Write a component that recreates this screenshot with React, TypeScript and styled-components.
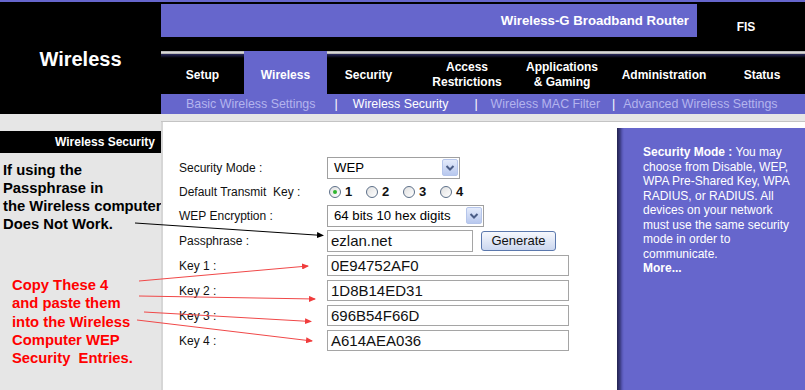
import React from 'react';
import styled, { createGlobalStyle } from 'styled-components';

const PURPLE = '#6666cc';

const GlobalStyle = createGlobalStyle`
  html, body {
    margin: 0;
    padding: 0;
    background: #fff;
  }
  body {
    font-family: "Liberation Sans", Arial, sans-serif;
  }
`;

const Page = styled.div`
  position: relative;
  width: 805px;
  height: 390px;
  overflow: hidden;
  background: #fff;
`;

const Top = styled.div`
  display: flex;
  height: 114px;
  box-sizing: border-box;
  background: #000;
  border-top: 2px solid ${PURPLE};
`;

const Brand = styled.div`
  width: 161px;
  flex-shrink: 0;
  display: flex;
  align-items: center;
  justify-content: center;
  padding-top: 3px;
  color: #fff;
  font-size: 20px;
  font-weight: bold;
`;

const TopRight = styled.div`
  flex: 1;
  display: flex;
  flex-direction: column;
`;

const HeaderRow = styled.div`
  display: flex;
  height: 49px;
`;

const TitleBar = styled.div`
  margin-top: 2px;
  width: 536px;
  height: 33px;
  box-sizing: border-box;
  padding-right: 8px;
  display: flex;
  align-items: center;
  justify-content: flex-end;
  background: ${PURPLE};
  color: #fff;
  font-size: 13.2px;
  font-weight: bold;
`;

const Fis = styled.div`
  flex: 1;
  padding: 18px 10px 0 0;
  text-align: center;
  color: #fff;
  font-size: 12px;
  font-weight: bold;
`;

const NavRow = styled.div`
  display: flex;
  height: 43px;
  background: linear-gradient(
    to bottom,
    #8a8a8a 0,
    #e8e8e8 1px,
    #a8a8a8 3px,
    #2a2a60 3px,
    #000 7px
  );
`;

const Tab = styled.div<{ $w: number; $active?: boolean }>`
  width: ${({ $w }) => $w}px;
  flex-shrink: 0;
  display: flex;
  align-items: center;
  justify-content: center;
  padding-top: 5px;
  box-sizing: border-box;
  text-align: center;
  color: #fff;
  font-size: 12px;
  font-weight: bold;
  line-height: 15px;
  background: ${({ $active }) => ($active ? PURPLE : 'transparent')};
`;

const SubNav = styled.div`
  height: 20px;
  display: flex;
  align-items: center;
  padding-left: 25px;
  background: ${PURPLE};
  font-size: 12.4px;
  white-space: nowrap;
`;

const SubItem = styled.span<{ $active?: boolean }>`
  color: ${({ $active }) => ($active ? '#fff' : '#b4b4ee')};
`;

const Sep = styled.span<{ $l: number; $r: number }>`
  color: #fff;
  margin: 0 ${({ $r }) => $r}px 0 ${({ $l }) => $l}px;
`;

const Body = styled.div`
  display: flex;
  height: 276px;
`;

const LeftCol = styled.div`
  width: 161px;
  flex-shrink: 0;
  padding-top: 17px;
  box-sizing: border-box;
  background: #e6e6e6;
`;

const SideHeader = styled.div`
  height: 22px;
  display: flex;
  align-items: center;
  justify-content: flex-end;
  padding-right: 6px;
  background: #000;
  color: #fff;
  font-size: 12px;
  font-weight: bold;
`;

const Note = styled.div<{ $red?: boolean }>`
  margin-top: ${({ $red }) => ($red ? 43 : 8)}px;
  padding-left: ${({ $red }) => ($red ? 12 : 3)}px;
  color: ${({ $red }) => ($red ? '#ff0000' : '#000')};
  font-size: 14.8px;
  font-weight: bold;
  line-height: ${({ $red }) => ($red ? 18.3 : 18)}px;
  white-space: nowrap;
`;

const Main = styled.div`
  flex: 1;
  display: flex;
  flex-direction: column;
`;

const GrayBand = styled.div`
  height: 7px;
  background: #e6e6e6;
  border-bottom: 1px solid #c4c4c4;
`;

const MainRow = styled.div`
  flex: 1;
  display: flex;
`;

const Form = styled.div`
  flex: 1;
  padding: 33px 0 0 16px;
  background: #fff;
  border-left: 2px solid #d6d6d6;
`;

const Row = styled.div<{ $h?: number }>`
  display: flex;
  align-items: center;
  height: ${({ $h }) => $h ?? 25}px;
`;

const Label = styled.div`
  width: 148px;
  flex-shrink: 0;
  color: #111;
  font-size: 12px;
  white-space: pre;
`;

const Select = styled.div<{ $w: number }>`
  width: ${({ $w }) => $w}px;
  height: 22px;
  box-sizing: border-box;
  display: flex;
  align-items: center;
  justify-content: space-between;
  padding-left: 6px;
  border: 1px solid #a0a0a0;
  background: #fff;
  color: #000;
  font-size: 13.2px;
`;

const DropButton = styled.div`
  width: 16px;
  height: 17px;
  margin-right: 1px;
  box-sizing: border-box;
  display: flex;
  align-items: center;
  justify-content: center;
  border: 1px solid #b5c5ea;
  border-radius: 2px;
  background: linear-gradient(to bottom, #e4ebfb, #b8c8ee);
`;

const Radios = styled.div`
  display: flex;
  align-items: center;
  margin-left: 2px;
`;

const RadioItem = styled.div`
  width: 37px;
  display: flex;
  align-items: center;
  gap: 4px;
  font-size: 13px;
  font-weight: bold;
  color: #111;
`;

const RadioCircle = styled.span<{ $on?: boolean }>`
  width: 12px;
  height: 12px;
  box-sizing: border-box;
  border: 1px solid #5c6f88;
  border-radius: 50%;
  display: flex;
  align-items: center;
  justify-content: center;
  background: linear-gradient(135deg, #e0e0e0, #fff);

  &::after {
    content: '';
    width: 4px;
    height: 4px;
    border-radius: 50%;
    background: ${({ $on }) => ($on ? '#2fb52f' : 'transparent')};
  }
`;

const TextBox = styled.div<{ $w: number; $h?: number }>`
  width: ${({ $w }) => $w}px;
  height: ${({ $h }) => $h ?? 22}px;
  box-sizing: border-box;
  display: flex;
  align-items: center;
  padding-left: 3px;
  border: 1px solid #a5a5a5;
  background: #fff;
  color: #111;
  font-size: 15px;
`;

const Button = styled.div`
  width: 75px;
  height: 20px;
  margin-left: 8px;
  box-sizing: border-box;
  display: flex;
  align-items: center;
  justify-content: center;
  border: 1px solid #5b78ad;
  border-radius: 3px;
  background: linear-gradient(to bottom, #f6f8fd, #cbd7ef);
  color: #111;
  font-size: 13px;
`;

const Help = styled.div`
  width: 188px;
  flex-shrink: 0;
  margin-top: 6px;
  box-sizing: border-box;
  padding: 17px 10px 0 26px;
  background: linear-gradient(
    to right,
    #23234f 0,
    #3a3a80 3px,
    #5656b4 5px,
    ${PURPLE} 7px
  );
  color: #fff;
  font-size: 12px;
  line-height: 14.5px;
`;

const HelpTerm = styled.span`
  font-weight: bold;
`;

const Overlay = styled.svg`
  position: absolute;
  left: 0;
  top: 0;
  pointer-events: none;
`;

const Chevron = () => (
  <svg width="10" height="8" viewBox="0 0 10 8">
    <polyline points="1.5,2 5,5.5 8.5,2" fill="none" stroke="#4b5d86" strokeWidth="2" />
  </svg>
);

const tabs = [
  { label: 'Setup', w: 83 },
  { label: 'Wireless', w: 83, active: true },
  { label: 'Security', w: 83 },
  { label: ['Access', 'Restrictions'], w: 114 },
  { label: ['Applications', '& Gaming'], w: 76 },
  { label: 'Administration', w: 128 },
  { label: 'Status', w: 68 },
];

const keys = ['0E94752AF0', '1D8B14ED31', '696B54F66D', 'A614AEA036'];

// annotation arrows drawn over the page: [x1, y1, x2, y2]
const redArrows = [
  [139, 281, 308, 266],
  [139, 296, 315, 299],
  [144, 312, 311, 321.5],
  [137, 320, 312, 341],
];

export default function App() {
  return (
    <Page>
      <GlobalStyle />
      <Top>
        <Brand>Wireless</Brand>
        <TopRight>
          <HeaderRow>
            <TitleBar>Wireless-G Broadband Router</TitleBar>
            <Fis>FIS</Fis>
          </HeaderRow>
          <NavRow>
            {tabs.map((t, i) => (
              <Tab key={i} $w={t.w} $active={t.active}>
                {Array.isArray(t.label) ? (
                  <span>
                    {t.label[0]}
                    <br />
                    {t.label[1]}
                  </span>
                ) : (
                  t.label
                )}
              </Tab>
            ))}
          </NavRow>
          <SubNav>
            <SubItem>Basic Wireless Settings</SubItem>
            <Sep $l={19} $r={15}>|</Sep>
            <SubItem $active>Wireless Security</SubItem>
            <Sep $l={26} $r={13}>|</Sep>
            <SubItem>Wireless MAC Filter</SubItem>
            <Sep $l={12} $r={8}>|</Sep>
            <SubItem>Advanced Wireless Settings</SubItem>
          </SubNav>
        </TopRight>
      </Top>

      <Body>
        <LeftCol>
          <SideHeader>Wireless Security</SideHeader>
          <Note>
            If using the
            <br />
            Passphrase in
            <br />
            the Wireless computer
            <br />
            Does Not Work.
          </Note>
          <Note $red>
            Copy These 4
            <br />
            and paste them
            <br />
            into the Wireless
            <br />
            Computer WEP
            <br />
            Security&nbsp; Entries.
          </Note>
        </LeftCol>

        <Main>
          <GrayBand />
          <MainRow>
            <Form>
              <Row>
                <Label>Security Mode :</Label>
                <Select $w={133}>
                  WEP
                  <DropButton>
                    <Chevron />
                  </DropButton>
                </Select>
              </Row>
              <Row $h={23}>
                <Label>Default Transmit  Key :</Label>
                <Radios>
                  {[1, 2, 3, 4].map((n) => (
                    <RadioItem key={n}>
                      <RadioCircle $on={n === 1} />
                      {n}
                    </RadioItem>
                  ))}
                </Radios>
              </Row>
              <Row>
                <Label>WEP Encryption :</Label>
                <Select $w={157}>
                  64 bits 10 hex digits
                  <DropButton>
                    <Chevron />
                  </DropButton>
                </Select>
              </Row>
              <Row>
                <Label>Passphrase :</Label>
                <TextBox $w={146}>ezlan.net</TextBox>
                <Button>Generate</Button>
              </Row>
              {keys.map((k, i) => (
                <Row key={k}>
                  <Label>Key {i + 1} :</Label>
                  <TextBox $w={242} $h={21}>
                    {k}
                  </TextBox>
                </Row>
              ))}
            </Form>
            <Help>
              <HelpTerm>Security Mode :</HelpTerm> You may choose from Disable, WEP, WPA
              Pre-Shared Key, WPA RADIUS, or RADIUS. All devices on your network must use the same
              security mode in order to communicate.
              <br />
              <HelpTerm>More...</HelpTerm>
            </Help>
          </MainRow>
        </Main>
      </Body>

      <Overlay width="805" height="390" viewBox="0 0 805 390">
        <defs>
          <marker id="headBlack" markerWidth="7" markerHeight="6" refX="6" refY="3" orient="auto" markerUnits="userSpaceOnUse">
            <polygon points="0,0 7,3 0,6" fill="#000" />
          </marker>
          <marker id="headRed" markerWidth="7" markerHeight="6" refX="6" refY="3" orient="auto" markerUnits="userSpaceOnUse">
            <polygon points="0,0 7,3 0,6" fill="#f03c3c" />
          </marker>
        </defs>
        <line x1="135" y1="223" x2="323" y2="235.5" stroke="#000" strokeWidth="1" markerEnd="url(#headBlack)" />
        {redArrows.map(([x1, y1, x2, y2], i) => (
          <line key={i} x1={x1} y1={y1} x2={x2} y2={y2} stroke="#f04848" strokeWidth="1" markerEnd="url(#headRed)" />
        ))}
      </Overlay>
    </Page>
  );
}
